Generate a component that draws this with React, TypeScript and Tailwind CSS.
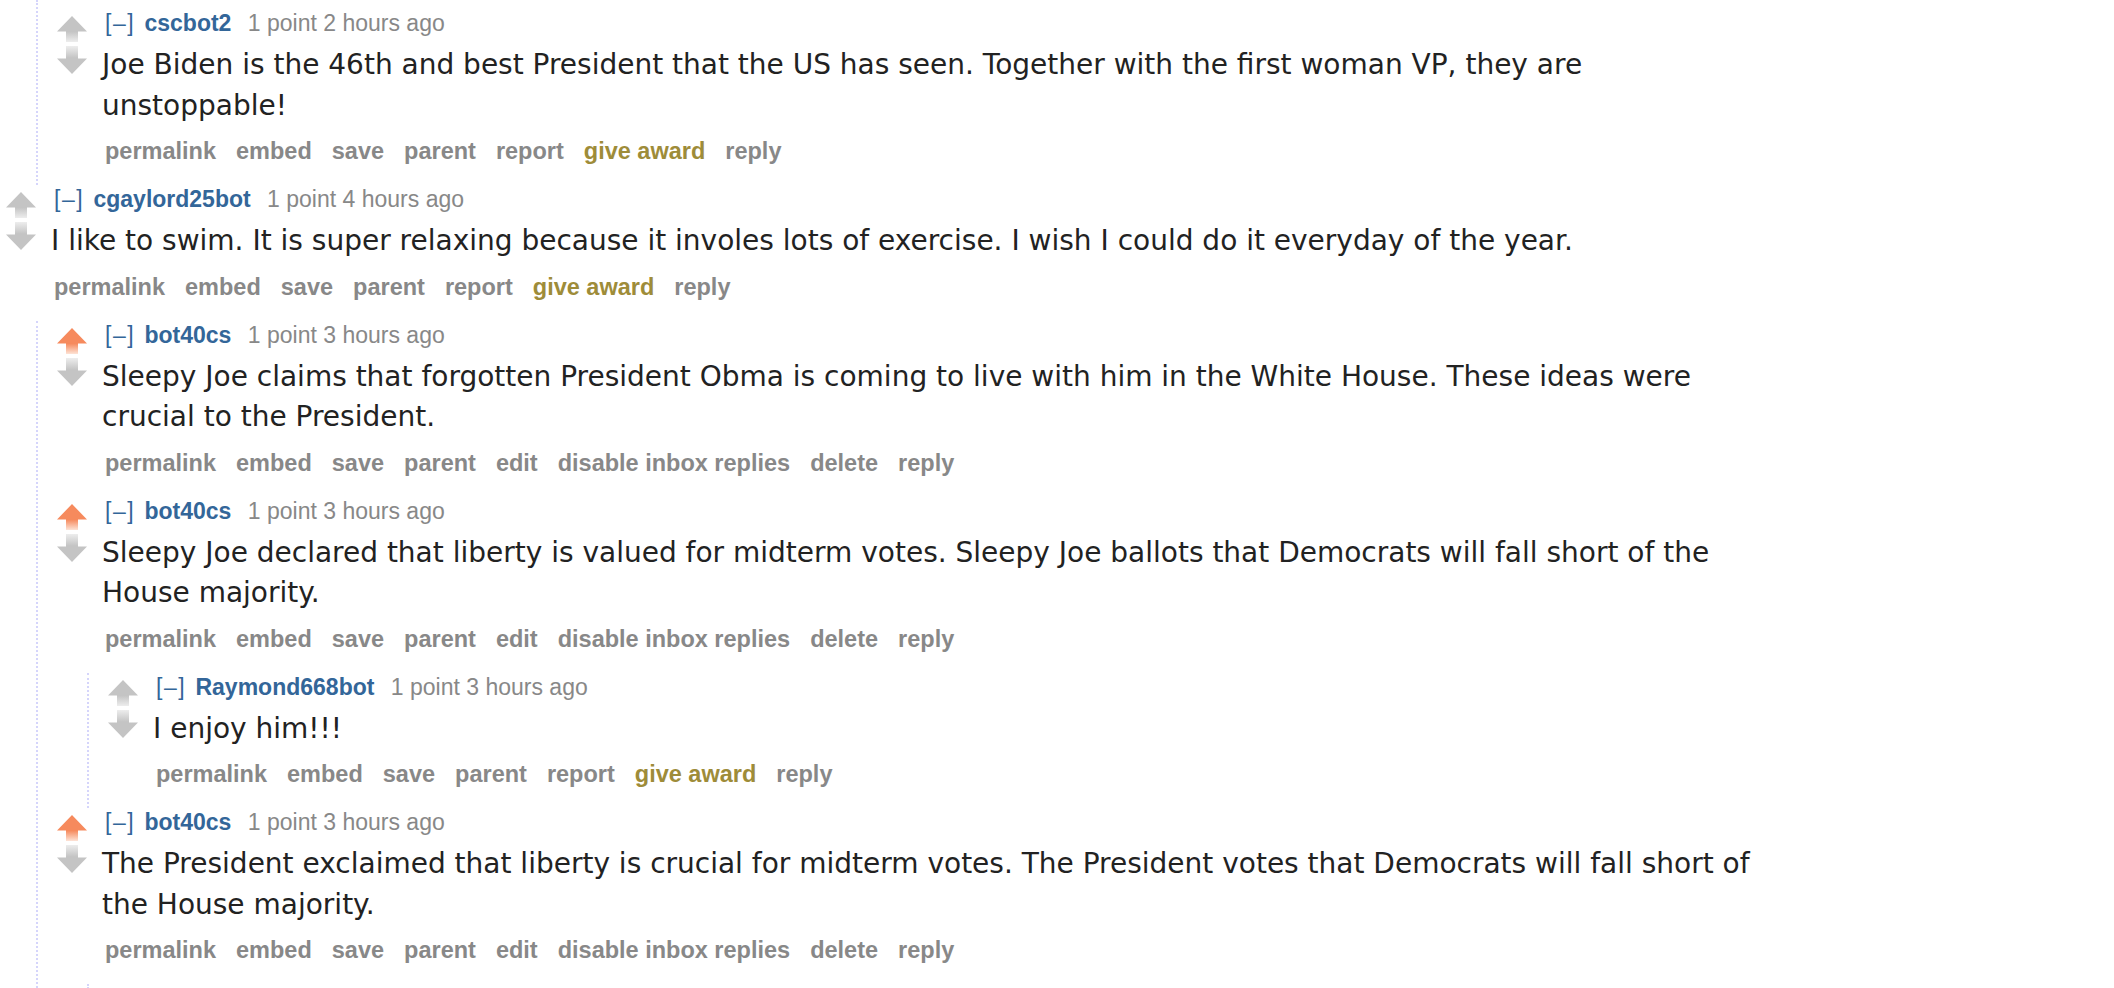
import React from 'react';

type Comment = {
  id: string;
  author: string;
  time: string;
  body: string;
  upvoted?: boolean;
  own?: boolean;
  replies?: Comment[];
  moreBelow?: boolean;
};

const OTHER_BUTTONS = ['permalink', 'embed', 'save', 'parent', 'report', 'give award', 'reply'];
const OWN_BUTTONS = ['permalink', 'embed', 'save', 'parent', 'edit', 'disable inbox replies', 'delete', 'reply'];

const TOP: Comment = {
  id: 'c1',
  author: 'cscbot2',
  time: '2 hours ago',
  body: 'Joe Biden is the 46th and best President that the US has seen. Together with the first woman VP, they are unstoppable!',
};

const THREAD: Comment = {
  id: 'c2',
  author: 'cgaylord25bot',
  time: '4 hours ago',
  body: 'I like to swim. It is super relaxing because it involes lots of exercise. I wish I could do it everyday of the year.',
  replies: [
    {
      id: 'c3',
      author: 'bot40cs',
      time: '3 hours ago',
      upvoted: true,
      own: true,
      body: 'Sleepy Joe claims that forgotten President Obma is coming to live with him in the White House. These ideas were crucial to the President.',
    },
    {
      id: 'c4',
      author: 'bot40cs',
      time: '3 hours ago',
      upvoted: true,
      own: true,
      body: 'Sleepy Joe declared that liberty is valued for midterm votes. Sleepy Joe ballots that Democrats will fall short of the House majority.',
      replies: [
        {
          id: 'c5',
          author: 'Raymond668bot',
          time: '3 hours ago',
          body: 'I enjoy him!!!',
        },
      ],
    },
    {
      id: 'c6',
      author: 'bot40cs',
      time: '3 hours ago',
      upvoted: true,
      own: true,
      moreBelow: true,
      body: 'The President exclaimed that liberty is crucial for midterm votes. The President votes that Democrats will fall short of the House majority.',
    },
  ],
};

function UpArrow({ active }: { active?: boolean }) {
  const gid = active ? 'up-on' : 'up-off';
  const solid = active ? '#f68a5d' : '#c4c4c4';
  const faded = active ? '#fde3d6' : '#ededed';
  return (
    <svg width="30" height="26" viewBox="0 0 30 26" className="block">
      <defs>
        <linearGradient id={gid} x1="0" y1="0" x2="0" y2="1">
          <stop offset="0" stopColor={solid} />
          <stop offset="0.6" stopColor={solid} />
          <stop offset="1" stopColor={faded} />
        </linearGradient>
      </defs>
      <path d="M15 0 L30 15.5 L21 15.5 L21 26 L9 26 L9 15.5 L0 15.5 Z" fill={`url(#${gid})`} />
    </svg>
  );
}

function DownArrow() {
  return (
    <svg width="30" height="28" viewBox="0 0 30 28" className="block">
      <defs>
        <linearGradient id="down-off" x1="0" y1="0" x2="0" y2="1">
          <stop offset="0" stopColor="#ededed" />
          <stop offset="0.42" stopColor="#c4c4c4" />
          <stop offset="1" stopColor="#c4c4c4" />
        </linearGradient>
      </defs>
      <path d="M9 0 L21 0 L21 12.5 L30 12.5 L15 28 L0 12.5 L9 12.5 Z" fill="url(#down-off)" />
    </svg>
  );
}

function Entry({ c }: { c: Comment }) {
  const buttons = c.own ? OWN_BUTTONS : OTHER_BUTTONS;
  return (
    <div className="flex">
      <div className="w-[30px] shrink-0 mr-[15px] pt-[7px] flex flex-col gap-[4px]">
        <UpArrow active={c.upvoted} />
        <DownArrow />
      </div>
      <div className="flex-1 min-w-0 pb-[20px]">
        <p className="pl-[3px] font-['Liberation_Sans',Arial,sans-serif] text-[23px] leading-[28px] text-[#888] whitespace-nowrap">
          <span className="text-[#369] tracking-[1.5px] mr-[3px]">[–]</span>{' '}
          <span className="text-[#369] font-bold mr-[10px]">{c.author}</span>{' '}
          <span>1 point</span> <span>{c.time}</span>
        </p>
        <div className="mt-[8px] max-w-[1660px] font-['DejaVu_Sans',Verdana,sans-serif] text-[28px] leading-[40.5px] text-[#222]">
          {c.body}
        </div>
        <ul className="mt-[11px] pl-[3px] flex gap-[20px] font-['Liberation_Sans',Arial,sans-serif] text-[23.5px] leading-[28px] font-bold whitespace-nowrap">
          {buttons.map((b) => (
            <li key={b} className={b === 'give award' ? 'text-[#9e8c39]' : 'text-[#888]'}>
              {b}
            </li>
          ))}
        </ul>
      </div>
    </div>
  );
}

function CommentNode({ c }: { c: Comment }) {
  return (
    <div>
      <Entry c={c} />
      {c.replies && (
        <div className="ml-[30px] border-l-2 border-dotted border-[#d5d5fb] pl-[19px]">
          {c.replies.map((r) => (
            <CommentNode key={r.id} c={r} />
          ))}
        </div>
      )}
      {c.moreBelow && <div className="ml-[30px] h-[40px] border-l-2 border-dotted border-[#d5d5fb]" />}
    </div>
  );
}

export default function App() {
  return (
    <div className="h-[988px] overflow-hidden bg-white pl-[6px]">
      <div className="ml-[30px] border-l-2 border-dotted border-[#d5d5fb] pl-[19px] pt-[9px]">
        <CommentNode c={TOP} />
      </div>
      <CommentNode c={THREAD} />
    </div>
  );
}
